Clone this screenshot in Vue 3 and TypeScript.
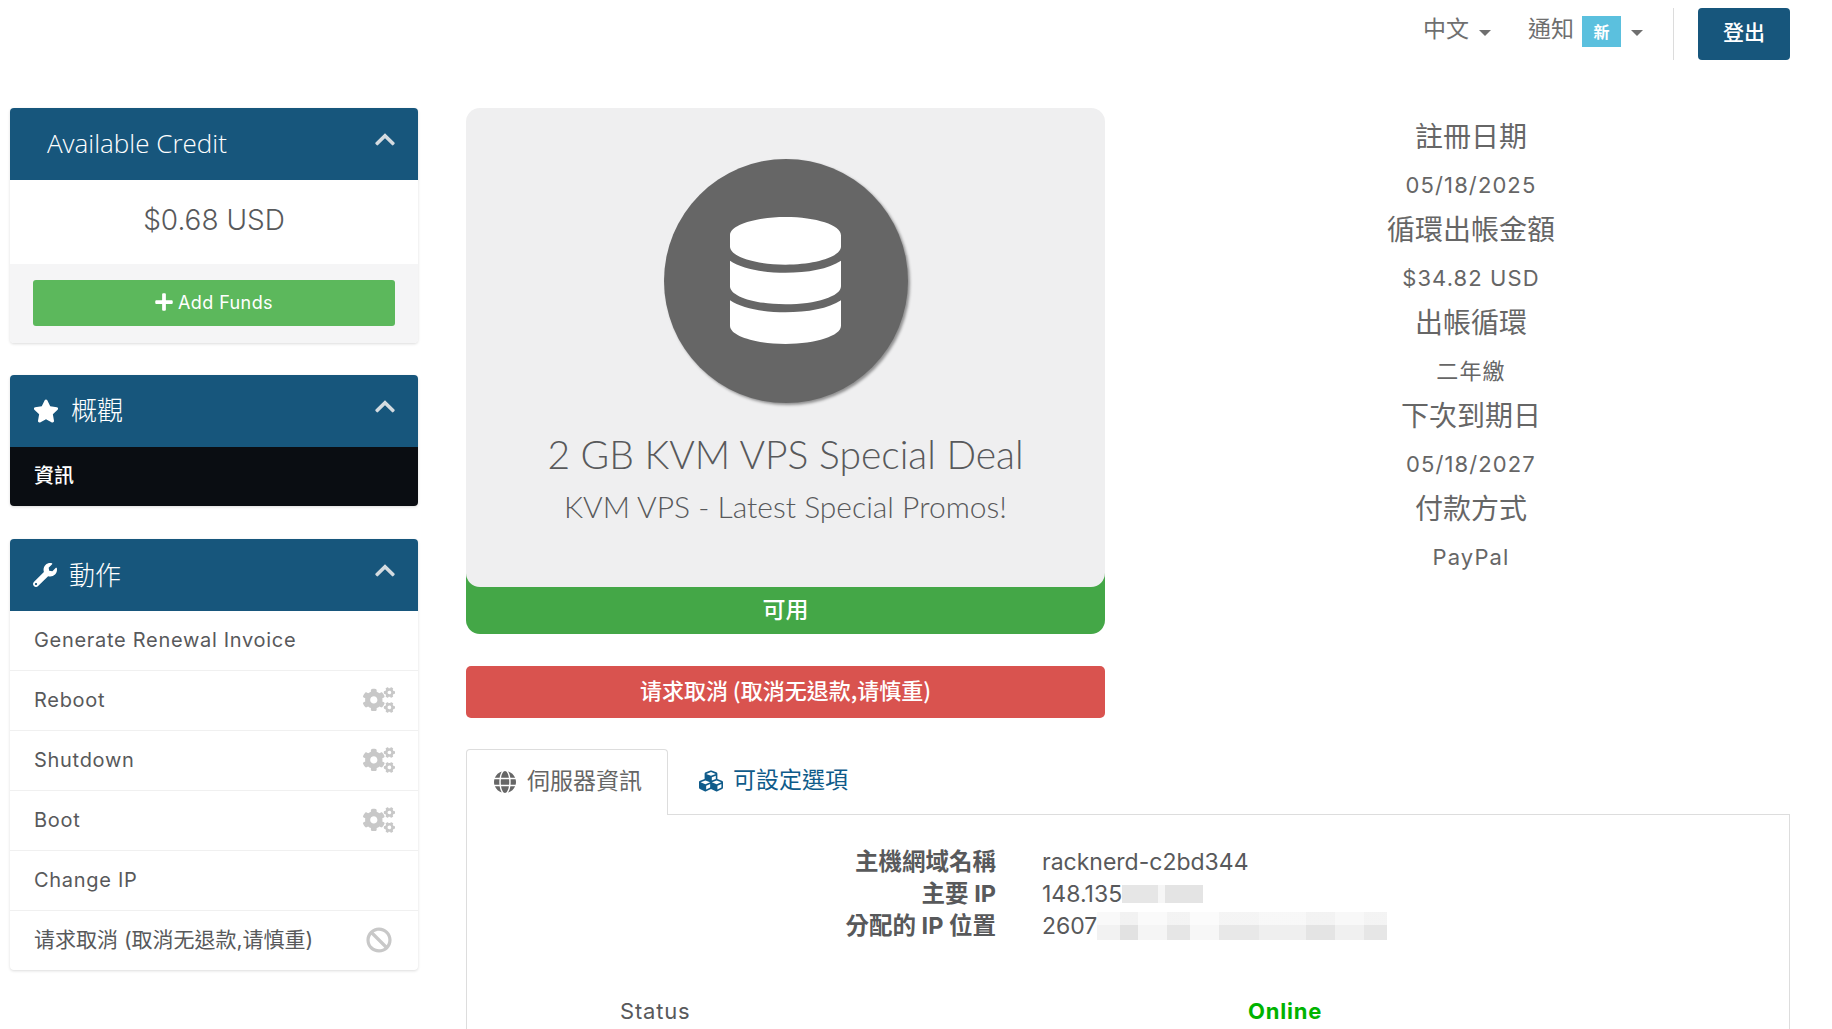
<script setup lang="ts">
interface ActionItem {
  label: string;
  icon?: 'cogs' | 'ban';
}

interface StatRow {
  title: string;
  value: string;
}

const actions: ActionItem[] = [
  { label: 'Generate Renewal Invoice' },
  { label: 'Reboot', icon: 'cogs' },
  { label: 'Shutdown', icon: 'cogs' },
  { label: 'Boot', icon: 'cogs' },
  { label: 'Change IP' },
  { label: '请求取消 (取消无退款,请慎重)', icon: 'ban' },
];

const stats: StatRow[] = [
  { title: '註冊日期', value: '05/18/2025' },
  { title: '循環出帳金額', value: '$34.82 USD' },
  { title: '出帳循環', value: '二年繳' },
  { title: '下次到期日', value: '05/18/2027' },
  { title: '付款方式', value: 'PayPal' },
];

const chevronPath =
  'M240.971 130.524l194.343 194.343c9.373 9.373 9.373 24.569 0 33.941l-22.667 22.667c-9.357 9.357-24.522 9.375-33.901.04L224 227.495 69.255 381.516c-9.379 9.335-24.544 9.317-33.901-.04l-22.667-22.667c-9.373-9.373-9.373-24.569 0-33.941L207.03 130.525c9.372-9.373 24.568-9.373 33.941-.001z';
const cogsPath =
  'M512.1 191l-8.2 14.3c-3 5.3-9.4 7.5-15.1 5.4-11.8-4.4-22.6-10.7-32.1-18.6-4.6-3.8-5.8-10.5-2.8-15.7l8.2-14.3c-6.9-8-12.3-17.3-15.9-27.4h-16.5c-6 0-11.2-4.3-12.2-10.3-2-12-2.1-24.6 0-37.1 1-6 6.2-10.4 12.2-10.4h16.5c3.6-10.1 9-19.4 15.9-27.4l-8.2-14.3c-3-5.2-1.9-11.9 2.8-15.7 9.5-7.9 20.4-14.2 32.1-18.6 5.7-2.1 12.1.1 15.1 5.4l8.2 14.3c10.5-1.9 21.2-1.9 31.7 0L552 6.3c3-5.3 9.4-7.5 15.1-5.4 11.8 4.4 22.6 10.7 32.1 18.6 4.6 3.8 5.8 10.5 2.8 15.7l-8.2 14.3c6.9 8 12.3 17.3 15.9 27.4h16.5c6 0 11.2 4.3 12.2 10.3 2 12 2.1 24.6 0 37.1-1 6-6.2 10.4-12.2 10.4h-16.5c-3.6 10.1-9 19.4-15.9 27.4l8.2 14.3c3 5.2 1.9 11.9-2.8 15.7-9.5 7.9-20.4 14.2-32.1 18.6-5.7 2.1-12.1-.1-15.1-5.4l-8.2-14.3c-10.4 1.9-21.2 1.9-31.7 0zm-10.5-58.8c38.5 29.6 82.4-14.3 52.8-52.8-38.5-29.7-82.4 14.3-52.8 52.8zM386.3 286.1l33.7 16.8c10.1 5.8 14.5 18.1 10.5 29.1-8.9 24.2-26.4 46.4-42.6 65.8-7.4 8.9-20.2 11.1-30.3 5.3l-29.1-16.8c-16 13.7-34.6 24.6-54.9 31.7v33.6c0 11.6-8.3 21.6-19.7 23.6-24.6 4.2-50.4 4.4-75.9 0-11.5-2-20-11.9-20-23.6V418c-20.3-7.2-38.9-18-54.9-31.7L74 403c-10 5.8-22.9 3.6-30.3-5.3-16.2-19.4-33.3-41.6-42.2-65.7-4-10.9.4-23.2 10.5-29.1l33.3-16.8c-3.9-20.9-3.9-42.4 0-63.4L12 205.8c-10.1-5.8-14.6-18.1-10.5-29 8.9-24.2 26-46.4 42.2-65.8 7.4-8.9 20.2-11.1 30.3-5.3l29.1 16.8c16-13.7 34.6-24.6 54.9-31.7V57.1c0-11.5 8.2-21.5 19.6-23.5 24.6-4.2 50.5-4.4 76-.1 11.5 2 20 11.9 20 23.6v33.6c20.3 7.2 38.9 18 54.9 31.7l29.1-16.8c10-5.8 22.9-3.6 30.3 5.3 16.2 19.4 33.2 41.6 42.1 65.8 4 10.9.1 23.2-10 29.1l-33.7 16.8c3.9 21 3.9 42.5 0 63.5zm-117.6 21.1c59.2-77-28.7-164.9-105.7-105.7-59.2 77 28.7 164.9 105.7 105.7zm243.4 182.7l-8.2 14.3c-3 5.3-9.4 7.5-15.1 5.4-11.8-4.4-22.6-10.7-32.1-18.6-4.6-3.8-5.8-10.5-2.8-15.7l8.2-14.3c-6.9-8-12.3-17.3-15.9-27.4h-16.5c-6 0-11.2-4.3-12.2-10.3-2-12-2.1-24.6 0-37.1 1-6 6.2-10.4 12.2-10.4h16.5c3.6-10.1 9-19.4 15.9-27.4l-8.2-14.3c-3-5.2-1.9-11.9 2.8-15.7 9.5-7.9 20.4-14.2 32.1-18.6 5.7-2.1 12.1.1 15.1 5.4l8.2 14.3c10.5-1.9 21.2-1.9 31.7 0l8.2-14.3c3-5.3 9.4-7.5 15.1-5.4 11.8 4.4 22.6 10.7 32.1 18.6 4.6 3.8 5.8 10.5 2.8 15.7l-8.2 14.3c6.9 8 12.3 17.3 15.9 27.4h16.5c6 0 11.2 4.3 12.2 10.3 2 12 2.1 24.6 0 37.1-1 6-6.2 10.4-12.2 10.4h-16.5c-3.6 10.1-9 19.4-15.9 27.4l8.2 14.3c3 5.2 1.9 11.9-2.8 15.7-9.5 7.9-20.4 14.2-32.1 18.6-5.7 2.1-12.1-.1-15.1-5.4l-8.2-14.3c-10.4 1.9-21.2 1.9-31.7 0zM501.6 431c38.5 29.6 82.4-14.3 52.8-52.8-38.5-29.6-82.4 14.3-52.8 52.8z';
const banPath =
  'M256 8C119.034 8 8 119.033 8 256s111.034 248 248 248 248-111.034 248-248S392.967 8 256 8zm130.108 117.892c65.448 65.448 70 165.481 20.677 235.637L150.47 105.216c70.204-49.356 170.226-44.735 235.638 20.676zM125.892 386.108c-65.448-65.448-70-165.481-20.677-235.637L361.53 406.784c-70.203 49.356-170.226 44.736-235.638-20.676z';
</script>

<template>
  <div class="page">
    <header class="topbar">
      <a class="top-link">中文 <i class="caret"></i></a>
      <a class="top-link top-link--notify">通知 <span class="badge">新</span> <i class="caret"></i></a>
      <span class="top-divider"></span>
      <button class="logout">登出</button>
    </header>

    <div class="columns">
      <aside class="sidebar">
        <section class="panel">
          <div class="panel-head panel-head--credit">
            <span class="panel-title panel-title--latin">Available Credit</span>
            <svg class="chevron" viewBox="0 0 448 512"><path :d="chevronPath" /></svg>
          </div>
          <div class="credit-amount">$0.68 USD</div>
          <div class="credit-foot">
            <button class="add-funds">
              <svg class="plus" viewBox="0 0 448 512"><path d="M416 208H272V64c0-17.67-14.33-32-32-32h-32c-17.67 0-32 14.33-32 32v144H32c-17.67 0-32 14.33-32 32v32c0 17.67 14.33 32 32 32h144v144c0 17.67 14.33 32 32 32h32c17.67 0 32-14.33 32-32V304h144c17.67 0 32-14.33 32-32v-32c0-17.67-14.33-32-32-32z" /></svg>
              Add Funds
            </button>
          </div>
        </section>

        <section class="panel">
          <div class="panel-head">
            <svg class="head-icon" viewBox="0 0 576 512"><path d="M259.3 17.8L194 150.2 47.9 171.5c-26.2 3.8-36.7 36.1-17.7 54.6l105.7 103-25 145.5c-4.5 26.3 23.2 46 46.4 33.7L288 439.6l130.7 68.7c23.2 12.2 50.9-7.4 46.4-33.7l-25-145.5 105.7-103c19-18.5 8.5-50.8-17.7-54.6L382 150.2 316.7 17.8c-11.7-23.6-45.6-23.9-57.4 0z" /></svg>
            <span class="panel-title panel-title--overview">概觀</span>
            <svg class="chevron" viewBox="0 0 448 512"><path :d="chevronPath" /></svg>
          </div>
          <div class="overview-item">資訊</div>
        </section>

        <section class="panel">
          <div class="panel-head">
            <svg class="head-icon head-icon--wrench" viewBox="0 0 512 512"><path d="M507.73 109.1c-2.24-9.03-13.54-12.09-20.12-5.51l-74.36 74.36-67.88-11.31-11.31-67.88 74.36-74.36c6.62-6.62 3.43-17.9-5.66-20.16-47.38-11.74-99.55.91-136.58 37.93-39.64 39.64-50.55 97.1-34.05 147.2L18.74 402.76c-24.99 24.99-24.99 65.51 0 90.5 24.99 24.99 65.51 24.99 90.5 0l213.21-213.21c50.12 16.71 107.47 5.68 147.37-34.22 37.07-37.07 49.7-89.32 37.91-136.73zM64 472c-13.25 0-24-10.75-24-24 0-13.26 10.75-24 24-24s24 10.74 24 24c0 13.25-10.75 24-24 24z" /></svg>
            <span class="panel-title">動作</span>
            <svg class="chevron" viewBox="0 0 448 512"><path :d="chevronPath" /></svg>
          </div>
          <ul class="action-list">
            <li v-for="item in actions" :key="item.label" class="action-row">
              <span :class="{ 'row-cjk': item.icon === 'ban' }">{{ item.label }}</span>
              <svg v-if="item.icon === 'cogs'" class="row-icon" viewBox="0 0 640 512"><path :d="cogsPath" /></svg>
              <svg v-else-if="item.icon === 'ban'" class="row-icon row-icon--ban" viewBox="0 0 512 512"><path :d="banPath" /></svg>
            </li>
          </ul>
        </section>
      </aside>

      <main class="content">
        <div class="summary">
          <div class="product">
            <div class="product-card">
              <div class="product-circle">
                <svg class="db-icon" viewBox="0 0 448 512"><path d="M448 73.143v45.714C448 159.143 347.667 192 224 192S0 159.143 0 118.857V73.143C0 32.857 100.333 0 224 0s224 32.857 224 73.143zM448 176v102.857C448 319.143 347.667 352 224 352S0 319.143 0 278.857V176c48.125 33.143 136.208 48.572 224 48.572S399.874 209.143 448 176zm0 160v102.857C448 479.143 347.667 512 224 512S0 479.143 0 438.857V336c48.125 33.143 136.208 48.572 224 48.572S399.874 369.143 448 336z" /></svg>
              </div>
              <h2 class="product-name">2 GB KVM VPS Special Deal</h2>
              <p class="product-group">KVM VPS - Latest Special Promos!</p>
            </div>
            <div class="product-status"><span>可用</span></div>
            <button class="cancel-btn"><span>请求取消 (取消无退款,请慎重)</span></button>
          </div>

          <div class="stats">
            <template v-for="row in stats" :key="row.title">
              <h4 class="stat-title">{{ row.title }}</h4>
              <p class="stat-value">{{ row.value }}</p>
            </template>
          </div>
        </div>

        <nav class="tabs">
          <a class="tab tab--active">
            <svg class="tab-icon" viewBox="0 0 496 512"><path d="M336.5 160C322 70.7 287.8 8 248 8s-74 62.7-88.5 152h177zM152 256c0 22.2 1.2 43.5 3.3 64h185.3c2.1-20.5 3.3-41.8 3.3-64s-1.2-43.5-3.3-64H155.3c-2.1 20.5-3.3 41.8-3.3 64zm324.7-96c-28.6-67.9-86.5-120.4-158-141.6 24.4 33.8 41.2 84.7 50 141.6h108zM177.2 18.4C105.8 39.6 47.8 92.1 19.3 160h108c8.7-56.9 25.5-107.8 49.9-141.6zM487.4 192H372.7c2.1 21 3.3 42.5 3.3 64s-1.2 43-3.3 64h114.6c5.5-20.5 8.6-41.8 8.6-64s-3.1-43.5-8.5-64zM120 256c0-21.5 1.2-43 3.3-64H8.6C3.2 212.5 0 233.8 0 256s3.2 43.5 8.6 64h114.6c-2-21-3.2-42.5-3.2-64zm39.5 96c14.5 89.3 48.7 152 88.5 152s74-62.7 88.5-152h-177zm159.3 141.6c71.4-21.2 129.4-73.7 158-141.6h-108c-8.8 56.9-25.6 107.8-50 141.6zM19.3 352c28.6 67.9 86.5 120.4 158 141.6-24.4-33.8-41.2-84.7-50-141.6h-108z" /></svg>
            <span>伺服器資訊</span>
          </a>
          <a class="tab tab--link">
            <svg class="tab-icon" viewBox="0 0 512 512"><path d="M488.6 250.2L392 214V105.5c0-15-9.3-28.4-23.4-33.7l-100-37.5c-8.1-3.1-17.1-3.1-25.3 0l-100 37.5c-14.1 5.3-23.4 18.7-23.4 33.7V214l-96.6 36.2C9.3 255.5 0 268.9 0 283.9V394c0 13.6 7.7 26.1 19.9 32.2l100 50c10.1 5.1 22.1 5.1 32.2 0l103.9-52 103.9 52c10.1 5.1 22.1 5.1 32.2 0l100-50c12.2-6.1 19.9-18.6 19.9-32.2V283.9c0-15-9.3-28.4-23.4-33.7zM358 214.8l-85 31.9v-68.2l85-37v73.3zM154 104.1l102-38.2 102 38.2v.6l-102 41.4-102-41.4v-.6zm84 291.1l-85 42.5v-79.1l85-38.8v75.4zm0-112l-102 41.4-102-41.4v-.6l102-38.2 102 38.2v.6zm240 112l-85 42.5v-79.1l85-38.8v75.4zm0-112l-102 41.4-102-41.4v-.6l102-38.2 102 38.2v.6z" /></svg>
            <span>可設定選項</span>
          </a>
        </nav>

        <div class="tab-pane">
          <dl class="host-info">
            <dt>主機網域名稱</dt>
            <dd>racknerd-c2bd344</dd>
            <dt>主要 IP</dt>
            <dd>148.135<span class="redact redact--ip"></span></dd>
            <dt>分配的 IP 位置</dt>
            <dd>2607<span class="redact redact--ip6"></span></dd>
          </dl>
          <div class="status-row">
            <span class="status-label">Status</span>
            <span class="status-value">Online</span>
          </div>
        </div>
      </main>
    </div>
  </div>
</template>

<style scoped>
.page {
  width: 1832px;
  height: 1029px;
  overflow: hidden;
  background: #fff;
  color: #58595b;
  font-family: Inter, "Noto Sans CJK TC", sans-serif;
}

.topbar {
  height: 108px;
  box-sizing: border-box;
  padding: 8px 42px 0 0;
  display: flex;
  align-items: flex-start;
  justify-content: flex-end;
}

.top-link {
  display: flex;
  align-items: center;
  gap: 8px;
  height: 38px;
  margin-right: 37px;
  font-size: 23px;
  color: #6f6f6f;
}

.top-link--notify {
  margin-right: 30px;
}

.caret {
  width: 0;
  height: 0;
  margin: 12px 0 0 2px;
  border-left: 6px solid transparent;
  border-right: 6px solid transparent;
  border-top: 6px solid #6f6f6f;
}

.badge {
  width: 39px;
  height: 31px;
  margin-top: 8px;
  display: flex;
  align-items: center;
  justify-content: center;
  background: #5bc0de;
  color: #fff;
  font-size: 16px;
  font-weight: 700;
}

.top-divider {
  width: 1px;
  height: 52px;
  margin-right: 24px;
  background: #dcdcdc;
}

.logout {
  width: 92px;
  height: 52px;
  padding: 0 0 7px;
  border: 0;
  border-radius: 4px;
  background: #17567c;
  color: #fff;
  font: 500 21px "Noto Sans CJK TC", sans-serif;
}

.columns {
  display: flex;
  gap: 48px;
  padding: 0 42px 0 10px;
}

.sidebar {
  width: 408px;
  flex: none;
  display: flex;
  flex-direction: column;
  gap: 32px;
}

.panel {
  border-radius: 4px;
  background: #fff;
  box-shadow: 0 1px 3px rgba(0, 0, 0, 0.14);
  overflow: hidden;
}

.panel-head {
  height: 72px;
  box-sizing: border-box;
  padding: 0 23px 0 23px;
  display: flex;
  align-items: center;
  background: #17567c;
  color: #fff;
}

.panel-head--credit {
  padding-left: 37px;
}

.panel-title {
  padding-bottom: 4px;
  font-size: 26px;
  font-family: "Noto Sans CJK TC", sans-serif;
  font-weight: 300;
}

.panel-title--overview {
  padding-bottom: 6px;
}

.panel-title--latin {
  padding-bottom: 3px;
  font-family: "Open Sans", sans-serif;
  font-size: 26px;
}

.chevron {
  width: 20px;
  height: 23px;
  margin-left: auto;
  margin-bottom: 10px;
  fill: #d4dbe0;
}

.head-icon {
  width: 26px;
  height: 24px;
  margin-right: 12px;
  fill: #fff;
}

.head-icon--wrench {
  width: 24px;
  margin-right: 12px;
}

.credit-amount {
  height: 84px;
  padding-bottom: 4px;
  box-sizing: border-box;
  display: flex;
  align-items: center;
  justify-content: center;
  font-size: 28px;
  font-weight: 300;
  color: #58595b;
}

.credit-foot {
  height: 79px;
  box-sizing: border-box;
  padding: 16px 23px 0;
  background: #f5f5f6;
}

.add-funds {
  width: 100%;
  height: 46px;
  padding: 0 0 2px;
  display: flex;
  align-items: center;
  justify-content: center;
  gap: 5px;
  border: 0;
  border-radius: 3px;
  background: #5cb85c;
  color: #fff;
  font: 400 18px Inter, sans-serif;
  letter-spacing: 0.4px;
}

.plus {
  width: 18px;
  height: 20px;
  fill: #fff;
}

.overview-item {
  height: 59px;
  box-sizing: border-box;
  padding: 0 0 5px 24px;
  display: flex;
  align-items: center;
  background: #0a0d12;
  color: #fff;
  font-size: 20px;
  font-weight: 500;
}

.sidebar > .panel:nth-child(2) {
  margin-bottom: 1px;
}

.action-list {
  margin: 0;
  padding: 0;
  list-style: none;
}

.action-row {
  height: 60px;
  box-sizing: border-box;
  padding: 0 23px 2px 24px;
  display: flex;
  align-items: center;
  justify-content: space-between;
  border-bottom: 1px solid #f0f0f0;
  font-size: 20px;
  letter-spacing: 0.7px;
}

.action-row:last-child {
  height: 59px;
  border-bottom: 0;
}

.row-cjk {
  padding-bottom: 4px;
  font-size: 21px;
  letter-spacing: 0;
}

.row-icon {
  width: 32px;
  height: 26px;
  fill: #c8c8c8;
}

.row-icon--ban {
  width: 26px;
  margin-right: 3px;
}

.content {
  flex: 1;
  min-width: 0;
}

.summary {
  display: flex;
  gap: 45px;
}

.product {
  width: 639px;
  flex: none;
}

.product-card {
  height: 479px;
  box-sizing: border-box;
  padding-top: 51px;
  position: relative;
  z-index: 1;
  border-radius: 14px;
  background: #efeff0;
  text-align: center;
}

.product-circle {
  width: 244px;
  height: 244px;
  margin: 0 auto;
  display: flex;
  align-items: center;
  justify-content: center;
  border-radius: 50%;
  background: #666666;
  box-shadow: 2px 2px 3px rgba(0, 0, 0, 0.4);
}

.db-icon {
  width: 111px;
  height: 127px;
  margin-top: -2px;
  fill: #fff;
}

.product-name {
  margin: 28px 0 0;
  font: 300 39px Lato, sans-serif;
  color: #58595b;
}

.product-group {
  margin: 11px 0 0;
  font: 300 30px Lato, sans-serif;
  color: #58595b;
}

.product-status {
  height: 62px;
  box-sizing: border-box;
  margin-top: -15px;
  padding: 15px 0 5px;
  display: flex;
  align-items: center;
  justify-content: center;
  border-radius: 0 0 14px 14px;
  background: #44a747;
  color: #fff;
  font-size: 23px;
  font-weight: 500;
}

.cancel-btn {
  width: 100%;
  height: 52px;
  margin-top: 32px;
  padding: 0 0 6px;
  border: 0;
  border-radius: 5px;
  background: #d9534f;
  color: #fff;
  font: 500 22px "Noto Sans CJK TC", sans-serif;
}

.stats {
  flex: 1;
  text-align: center;
  padding: 8px 0 0 2px;
}

.stat-title {
  margin: 0;
  height: 44px;
  line-height: 43px;
  font-size: 28px;
  font-weight: 400;
  color: #666;
}

.stat-value {
  margin: 0;
  height: 49px;
  line-height: 51px;
  font-size: 22px;
  letter-spacing: 1.1px;
  color: #666;
}

.tabs {
  display: flex;
  margin-top: 31px;
  border-bottom: 1px solid #ddd;
  height: 66px;
  box-sizing: border-box;
}

.tab {
  display: flex;
  align-items: center;
  gap: 11px;
  padding: 0 24px 0 27px;
  font-size: 23px;
}

.tab span {
  padding-bottom: 7px;
}

.tab-icon {
  width: 22px;
  height: 24px;
  margin-top: -1px;
  fill: currentColor;
}

.tab--active {
  width: 202px;
  box-sizing: border-box;
  height: 66px;
  border: 1px solid #ddd;
  border-bottom: 0;
  border-radius: 4px 4px 0 0;
  background: #fff;
  color: #666;
}

.tab--link {
  padding-left: 31px;
  gap: 10px;
  color: #0f5b8a;
}

.tab--link .tab-icon {
  width: 24px;
}

.tab-pane {
  height: 220px;
  box-sizing: border-box;
  padding-top: 31px;
  border-left: 1px solid #ddd;
  border-right: 1px solid #ddd;
}

.host-info {
  margin: 0;
  display: grid;
  grid-template-columns: 529px 1fr;
  column-gap: 46px;
  row-gap: 0;
  font-size: 23px;
  line-height: 32px;
}

.host-info dt {
  text-align: right;
  font-size: 23.5px;
  font-weight: 700;
}

.host-info dd {
  margin: 0;
  display: flex;
  align-items: center;
}

.redact {
  display: block;
  background-color: #ececec;
}

.redact--ip {
  width: 90px;
  height: 18px;
  background: linear-gradient(90deg, #e6e6e6 0 40%, #f6f6f6 40% 48%, #e4e4e4 48% 90%, #fff 90%);
}

.redact--ip6 {
  width: 290px;
  height: 28px;
  background:
    linear-gradient(180deg, rgba(255, 255, 255, 0.55) 0 45%, transparent 45%),
    linear-gradient(90deg, #f2f2f2 0 8%, #e2e2e2 8% 14%, #f5f5f5 14% 24%, #e6e6e6 24% 32%, #f7f7f7 32% 42%, #e8e8e8 42% 56%, #efefef 56% 72%, #e4e4e4 72% 82%, #f0f0f0 82% 92%, #e6e6e6 92%);
}

.status-row {
  display: flex;
  margin-top: 56px;
  padding-left: 153px;
  font-size: 22px;
  letter-spacing: 0.8px;
}

.status-label {
  width: 628px;
}

.status-value {
  color: #00b300;
  font-weight: 700;
}
</style>

<style>
html,
body {
  margin: 0;
  overflow: hidden;
}
</style>
